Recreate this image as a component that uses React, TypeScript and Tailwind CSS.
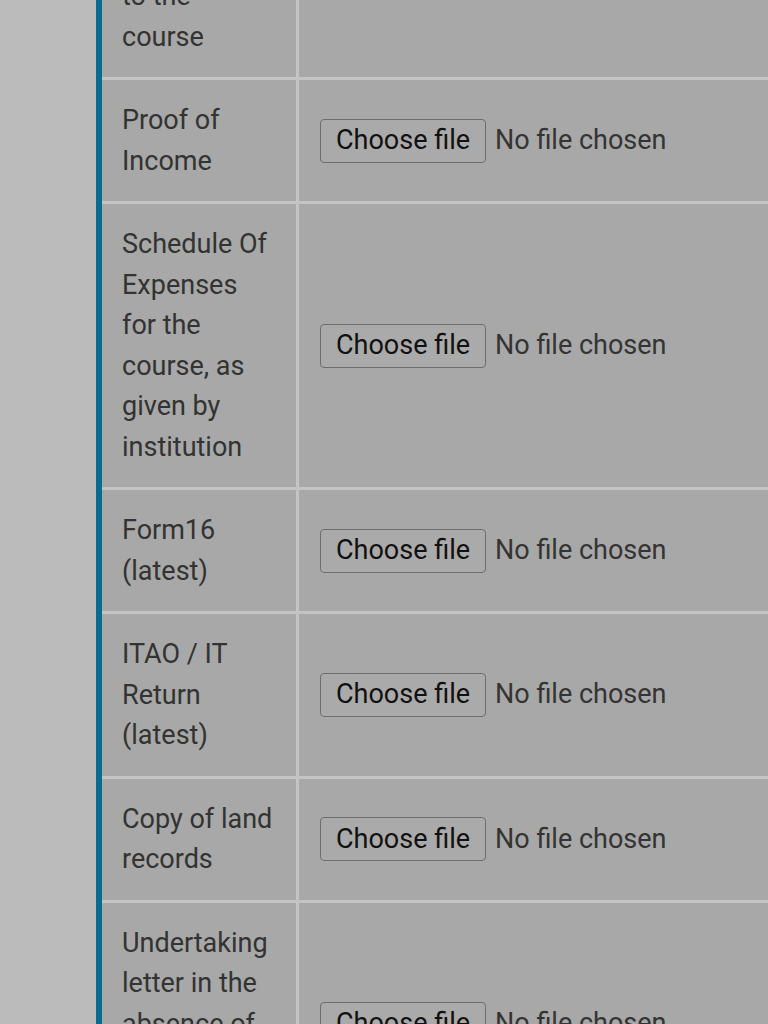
import React from 'react';

interface DocRow {
  label: string;
}

const rows: DocRow[] = [
  { label: 'Proof of admission to the course' },
  { label: 'Proof of Income' },
  { label: 'Schedule Of Expenses for the course, as given by institution' },
  { label: 'Form16 (latest)' },
  { label: 'ITAO / IT Return (latest)' },
  { label: 'Copy of land records' },
  { label: 'Undertaking letter in the absence of Form16 / ITAO' },
  { label: 'Passport size photograph' },
];

const FilePicker: React.FC = () => (
  <div className="flex items-center gap-[9px]">
    <button
      type="button"
      className="h-[44px] px-[15px] bg-[#a9aaa9] border border-[#6c6d6c] rounded-[4px] text-[27px] leading-none text-[#111111]"
    >
      Choose file
    </button>
    <span className="text-[27px] leading-none text-[#333433] whitespace-nowrap">No file chosen</span>
  </div>
);

export default function App() {
  return (
    <div
      className="h-[1024px] overflow-hidden bg-[#bbbbbb] pl-[96px]"
      style={{ fontFamily: 'Roboto, "Noto Sans", "Liberation Sans", sans-serif' }}
    >
      <div className="border-l-[6px] border-[#0b6a8d] bg-[#a7a8a7] -mt-[125px]">
        {rows.map((row) => (
          <div key={row.label} className="flex border-b-[3px] border-[#c3c4c3]">
            <div className="w-[197px] shrink-0 border-r-[3px] border-[#c3c4c3] px-[20px] py-[20px] text-[27px] leading-[40.5px] text-[#323332]">
              {row.label}
            </div>
            <div className="flex-1 flex items-center pl-[21px]">
              <FilePicker />
            </div>
          </div>
        ))}
      </div>
    </div>
  );
}
